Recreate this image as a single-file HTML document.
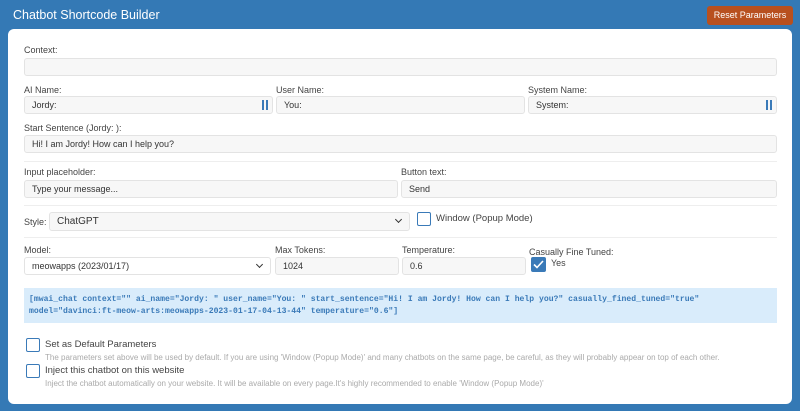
<!DOCTYPE html>
<html><head><style>
*{box-sizing:border-box;margin:0;padding:0}
body{width:800px;height:411px;background:#3479b5;font-family:"Liberation Sans",sans-serif;position:relative;overflow:hidden;color:#333}
.title{position:absolute;left:13px;top:8px;color:#fff;font-size:12.5px}
.btn{position:absolute;left:707px;top:6px;width:86px;height:19px;background:#b8501f;border-radius:3px;color:#fff;font-size:9px;line-height:19px;text-align:center}
.panel{position:absolute;left:8px;top:29px;width:784px;height:375px;background:#fff;border-radius:6px}
.a{position:absolute}
.l{position:absolute;font-size:9px;color:#444}
.i{position:absolute;height:18px;background:#f7f7f7;border:1px solid #e3e3e3;border-radius:3px;font-size:9px;line-height:16px;padding-left:7px;color:#333}
.sep{position:absolute;left:24px;width:753px;height:1px;background:#eee}
.cb{position:absolute;width:14px;height:14px;border:1.5px solid #3a7ab8;border-radius:2px;background:#fff}
.ic{position:absolute;right:4px;top:3px;width:6px;height:10px;border-left:2px solid #3a7ab8;border-right:2px solid #3a7ab8}
.chev{position:absolute;right:8px;top:4px;width:5px;height:5px;border-right:1.3px solid #333;border-bottom:1.3px solid #333;transform:rotate(45deg)}
.code{position:absolute;left:24px;top:288px;width:753px;height:35px;background:#d9ecfb;font-family:"Liberation Mono",monospace;font-weight:bold;font-size:8.1px;color:#3a7ab8;padding:6px 5px;line-height:12px;white-space:pre}
.d{position:absolute;font-size:8px;color:#aaa;white-space:nowrap}
</style></head><body>
<div class="title">Chatbot Shortcode Builder</div>
<div class="btn">Reset Parameters</div>
<div class="panel"></div>
<div class="l" style="left:24px;top:45px">Context:</div>
<div class="i" style="left:24px;top:58px;width:753px"></div>
<div class="l" style="left:24px;top:85px">AI Name:</div>
<div class="l" style="left:276px;top:85px">User Name:</div>
<div class="l" style="left:528px;top:85px">System Name:</div>
<div class="i" style="left:24px;top:96px;width:249px">Jordy:<span class="ic"></span></div>
<div class="i" style="left:276px;top:96px;width:249px">You:</div>
<div class="i" style="left:528px;top:96px;width:249px">System:<span class="ic"></span></div>
<div class="l" style="left:24px;top:123px">Start Sentence (Jordy: ):</div>
<div class="i" style="left:24px;top:135px;width:753px">Hi! I am Jordy! How can I help you?</div>
<div class="sep" style="top:161px"></div>
<div class="l" style="left:24px;top:167px">Input placeholder:</div>
<div class="l" style="left:401px;top:167px">Button text:</div>
<div class="i" style="left:24px;top:180px;width:374px">Type your message...</div>
<div class="i" style="left:401px;top:180px;width:376px">Send</div>
<div class="sep" style="top:205px"></div>
<div class="l" style="left:24px;top:217px">Style:</div>
<div class="i" style="left:49px;top:212px;width:361px;height:19px;background:#f7f7f7;font-size:10px;line-height:17px">ChatGPT<span class="chev"></span></div>
<div class="cb" style="left:417px;top:212px"></div>
<div class="l" style="left:436px;top:213px;font-size:9.5px">Window (Popup Mode)</div>
<div class="sep" style="top:237px"></div>
<div class="l" style="left:24px;top:245px">Model:</div>
<div class="l" style="left:275px;top:245px">Max Tokens:</div>
<div class="l" style="left:402px;top:245px">Temperature:</div>
<div class="l" style="left:529px;top:247px">Casually Fine Tuned:</div>
<div class="i" style="left:24px;top:257px;width:247px;background:#fff">meowapps (2023/01/17)<span class="chev"></span></div>
<div class="i" style="left:275px;top:257px;width:124px">1024</div>
<div class="i" style="left:402px;top:257px;width:124px">0.6</div>
<div class="a" style="left:531px;top:257px;width:15px;height:15px;background:#3a7ab8;border-radius:2px"><svg width="15" height="15"><path d="M3 7.5l3 3 6-6.5" stroke="#fff" stroke-width="1.6" fill="none"/></svg></div>
<div class="l" style="left:551px;top:258px">Yes</div>
<div class="code">[mwai_chat context="" ai_name="Jordy: " user_name="You: " start_sentence="Hi! I am Jordy! How can I help you?" casually_fined_tuned="true"
model="davinci:ft-meow-arts:meowapps-2023-01-17-04-13-44" temperature="0.6"]</div>
<div class="cb" style="left:26px;top:338px"></div>
<div class="l" style="left:45px;top:339px;font-size:9.5px">Set as Default Parameters</div>
<div class="d" style="left:45px;top:353px">The parameters set above will be used by default. If you are using 'Window (Popup Mode)' and many chatbots on the same page, be careful, as they will probably appear on top of each other.</div>
<div class="cb" style="left:26px;top:364px"></div>
<div class="l" style="left:45px;top:365px;font-size:9.5px">Inject this chatbot on this website</div>
<div class="d" style="left:45px;top:379px">Inject the chatbot automatically on your website. It will be available on every page.It's highly recommended to enable 'Window (Popup Mode)'</div>
</body></html>
